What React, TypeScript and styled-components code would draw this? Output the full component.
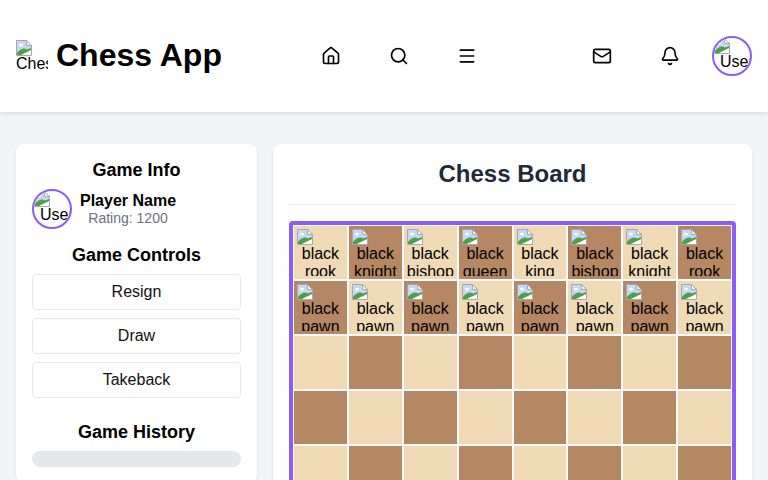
import React from 'react';
import styled, { createGlobalStyle } from 'styled-components';
import { Bell, House, Mail, Menu, Search } from 'lucide-react';

const GlobalStyle = createGlobalStyle`
  * {
    box-sizing: border-box;
  }

  html,
  body {
    margin: 0;
    background-color: #f3f4f6;
    color: #000;
    font-family: 'Liberation Sans', Arial, sans-serif;
    font-size: 16px;
  }

  ::-webkit-scrollbar {
    display: none;
  }
`;

const Header = styled.header`
  height: 112px;
  padding: 0 16px;
  display: flex;
  align-items: center;
  justify-content: space-between;
  background-color: white;
  box-shadow: 0 2px 4px rgba(0, 0, 0, 0.1);
`;

const Brand = styled.div`
  display: flex;
  align-items: center;
  gap: 8px;
`;

const Logo = styled.div`
  width: 32px;
  height: 32px;
  overflow: hidden;
  line-height: 15px;
`;

const Title = styled.h1`
  margin: 0 0 2px;
  font-size: 32px;
  line-height: 37px;
  font-weight: 700;
`;

const Nav = styled.nav`
  display: flex;
  align-items: center;
  gap: 16px;
`;

const IconButton = styled.button`
  width: 52px;
  height: 40px;
  padding: 0;
  display: flex;
  align-items: center;
  justify-content: center;
  border: none;
  background: none;
  color: #000;
`;

const Avatar = styled.div`
  width: 40px;
  height: 40px;
  flex-shrink: 0;
  border: 2px solid #8b5cf6;
  border-radius: 50%;
  overflow: hidden;
`;

const AvatarAlt = styled.span`
  display: block;
  padding-left: 6px;
  line-height: 15px;
  white-space: nowrap;
`;

const Content = styled.main`
  padding: 32px 16px;
  display: grid;
  grid-template-columns: 241px minmax(0, 1fr);
  gap: 16px;
  align-items: start;
`;

const Card = styled.section`
  padding: 16px;
  background-color: white;
  border-radius: 8px;
  box-shadow: 0 1px 3px rgba(0, 0, 0, 0.1);
`;

const SideTitle = styled.h2`
  margin: 0 0 8px;
  font-size: 18px;
  line-height: 21px;
  font-weight: 700;
  text-align: center;
`;

const PlayerRow = styled.div`
  display: flex;
  align-items: center;
  gap: 8px;
  margin-bottom: 16px;
`;

const PlayerInfo = styled.div`
  text-align: center;
`;

const PlayerName = styled.div`
  font-weight: 700;
  line-height: 18px;
`;

const Rating = styled.div`
  font-size: 14px;
  line-height: 16px;
  color: #6b7280;
`;

const Controls = styled.div`
  display: flex;
  flex-direction: column;
  gap: 8px;
  margin-bottom: 24px;
`;

const ControlButton = styled.button`
  height: 36px;
  padding: 0;
  background-color: white;
  border: 1px solid #e5e7eb;
  border-radius: 4px;
  color: #111;
  font-family: inherit;
  font-size: 16px;
`;

const HistoryBar = styled.div`
  height: 16px;
  background-color: #e5e7eb;
  border-radius: 8px;
`;

const BoardTitle = styled.h2`
  margin: 0 0 16px;
  padding-bottom: 16px;
  border-bottom: 1px solid #e5e7eb;
  font-size: 24px;
  line-height: 28px;
  font-weight: 700;
  color: #1f2937;
  text-align: center;
`;

const Board = styled.div`
  display: grid;
  grid-template-columns: repeat(8, minmax(0, 1fr));
  grid-auto-rows: 54.875px;
  background-color: white;
  border: 4px solid #8b5cf6;
  border-radius: 4px;
`;

const Square = styled.div<{ $dark: boolean }>`
  min-width: 0;
  padding: 3px;
  border: 1px solid #f9fafb;
  background-color: ${(props) => (props.$dark ? '#b58863' : '#f0d9b5')};
`;

const Piece = styled.div`
  height: 100%;
  overflow: hidden;
  line-height: 18px;
  text-align: center;
`;

const BrokenSvg = styled.svg`
  display: block;
`;

const BrokenIcon = () => (
  <BrokenSvg width="16" height="16" viewBox="0 0 16 16">
    <path d="M0.5 0.5H10.5L15.5 5.5V15.5H0.5Z" fill="#fff" stroke="#a8a8a8" />
    <path d="M1 1H10V6H15V10L1 14Z" fill="#c6d6f4" />
    <path d="M3 5a2 1.2 0 0 1 4 0a1.4 1 0 0 1-4 0Z" fill="#fff" />
    <path d="M1 15V13C4 9 8 7.5 11 9.5L15 8V10C12 12 8 13 5 15Z" fill="#4f9f46" />
    <path d="M10.5 0.5V5.5H15.5Z" fill="#f2f2f2" stroke="#a8a8a8" />
  </BrokenSvg>
);

const backRank = ['rook', 'knight', 'bishop', 'queen', 'king', 'bishop', 'knight', 'rook'];

const pieceAt = (row: number, col: number) => {
  if (row === 0) return `black ${backRank[col]}`;
  if (row === 1) return 'black pawn';
  if (row === 6) return 'white pawn';
  if (row === 7) return `white ${backRank[col]}`;
  return '';
};

const squares = Array.from({ length: 64 }, (_, i) => {
  const row = Math.floor(i / 8);
  const col = i % 8;
  return { id: i, dark: (row + col) % 2 === 1, piece: pieceAt(row, col) };
});

const App = () => {
  return (
    <>
      <GlobalStyle />
      <Header>
        <Brand>
          <Logo>
            <BrokenIcon />
            Chess
          </Logo>
          <Title>Chess App</Title>
        </Brand>
        <Nav>
          <IconButton>
            <House size={20} />
          </IconButton>
          <IconButton>
            <Search size={20} />
          </IconButton>
          <IconButton>
            <Menu size={20} />
          </IconButton>
        </Nav>
        <Nav>
          <IconButton>
            <Mail size={20} />
          </IconButton>
          <IconButton>
            <Bell size={20} />
          </IconButton>
          <Avatar>
            <BrokenIcon />
            <AvatarAlt>User</AvatarAlt>
          </Avatar>
        </Nav>
      </Header>
      <Content>
        <Card>
          <SideTitle>Game Info</SideTitle>
          <PlayerRow>
            <Avatar>
              <BrokenIcon />
              <AvatarAlt>User</AvatarAlt>
            </Avatar>
            <PlayerInfo>
              <PlayerName>Player Name</PlayerName>
              <Rating>Rating: 1200</Rating>
            </PlayerInfo>
          </PlayerRow>
          <SideTitle>Game Controls</SideTitle>
          <Controls>
            <ControlButton>Resign</ControlButton>
            <ControlButton>Draw</ControlButton>
            <ControlButton>Takeback</ControlButton>
          </Controls>
          <SideTitle>Game History</SideTitle>
          <HistoryBar />
        </Card>
        <Card>
          <BoardTitle>Chess Board</BoardTitle>
          <Board>
            {squares.map((square) => (
              <Square key={square.id} $dark={square.dark}>
                {square.piece && (
                  <Piece>
                    <BrokenIcon />
                    {square.piece}
                  </Piece>
                )}
              </Square>
            ))}
          </Board>
        </Card>
      </Content>
    </>
  );
};

export default App;
